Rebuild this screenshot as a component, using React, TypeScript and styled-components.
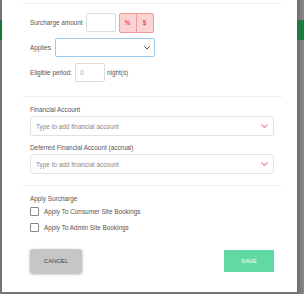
import styled, { createGlobalStyle } from 'styled-components';

const GlobalStyle = createGlobalStyle`
    html, body {
        margin: 0;
        padding: 0;
        background: #7a7a7a;
        font-family: "Liberation Sans", Arial, sans-serif;
    }
`

const Chevron = ({ color, size }: { color: string; size: number }): JSX.Element => (
    <svg width={size} height={size * 0.6} viewBox="0 0 10 6" fill="none">
        <path d="M1 1 L5 5 L9 1" stroke={color} strokeWidth="1.6" strokeLinecap="round" strokeLinejoin="round" />
    </svg>
)

const App = (): JSX.Element => {
    return (
        <Page>
            <GlobalStyle />
            <Backdrop width={2}><GreenPatch /></Backdrop>
            <Column>
                <Modal>
                    <Section>
                        <Row>
                            <Label>Surcharge amount</Label>
                            <SmallInput />
                            <Toggle>
                                <ToggleHalf>%</ToggleHalf>
                                <ToggleHalf>$</ToggleHalf>
                            </Toggle>
                        </Row>
                        <Row>
                            <Label>Applies</Label>
                            <Select>
                                <Chevron color="#444" size={6} />
                            </Select>
                        </Row>
                        <Row>
                            <Label>Eligible period:</Label>
                            <SmallInput placeholder="0" />
                            <Label>night(s)</Label>
                        </Row>
                    </Section>
                    <Section pad="9px 8px 11px 7px">
                        <FieldLabel>Financial Account</FieldLabel>
                        <Combo>
                            <span>Type to add financial account</span>
                            <Chevron color="#f58fa6" size={7} />
                        </Combo>
                        <FieldLabel spaced>Deferred Financial Account (accrual)</FieldLabel>
                        <Combo>
                            <span>Type to add financial account</span>
                            <Chevron color="#f58fa6" size={7} />
                        </Combo>
                    </Section>
                    <Section pad="9px 8px 0 7px">
                        <FieldLabel>Apply Surcharge</FieldLabel>
                        <CheckRow>
                            <Box />
                            <CheckText>Apply To Consumer Site Bookings</CheckText>
                        </CheckRow>
                        <CheckRow spaced>
                            <Box />
                            <CheckText>Apply To Admin Site Bookings</CheckText>
                        </CheckRow>
                        <Buttons>
                            <CancelButton>CANCEL</CancelButton>
                            <SaveButton>SAVE</SaveButton>
                        </Buttons>
                    </Section>
                </Modal>
            </Column>
            <Backdrop width={7}><GreenPatch /></Backdrop>
        </Page>
    )
}

export default App

const Page = styled.div`
    display: flex;
    width: 304px;
    height: 294px;
    overflow: hidden;
    background: #7a7a7a;
`
const Backdrop = styled.div<{ width: number }>`
    width: ${p => p.width}px;
    flex-shrink: 0;
    padding-top: 20px;
    background: linear-gradient(90deg, #6e6e6e, #8a8a8a);
`
const GreenPatch = styled.div`
    height: 20px;
    background: #1d7a42;
`
const Column = styled.div`
    flex: 1;
    display: flex;
    flex-direction: column;
`
const Modal = styled.div`
    height: 292px;
    background: #fff;
    padding: 3px 15px 0 21px;
    box-sizing: border-box;
    box-shadow: 0 0 2px rgba(0,0,0,0.3);
`
const Section = styled.div<{ pad?: string }>`
    border-top: 1px solid #eeeeee;
    padding: ${p => p.pad ?? '9px 8px 14px 7px'};
    display: flex;
    flex-direction: column;
`
const Row = styled.div`
    display: flex;
    align-items: center;
    gap: 2px;
    height: 19px;
    & + & { margin-top: 6px; }
`
const Label = styled.span`
    font-size: 6.4px;
    color: #555;
    margin-right: 1px;
    white-space: nowrap;
`
const SmallInput = styled.input`
    width: 30px;
    height: 19px;
    box-sizing: border-box;
    border: 1px solid #dcdcdc;
    border-radius: 2px;
    padding: 0 4px;
    font-size: 6.4px;
    font-family: "Liberation Sans", Arial, sans-serif;
    outline: none;
    &::placeholder { color: #aaa; }
`
const Toggle = styled.div`
    display: flex;
    height: 18px;
    margin-left: 1px;
    border: 1px solid #f39a9a;
    border-radius: 2px;
    background: #fbd3d3;
    overflow: hidden;
`
const ToggleHalf = styled.div`
    width: 16px;
    display: flex;
    align-items: center;
    justify-content: center;
    font-size: 6.4px;
    font-weight: bold;
    color: #e0506a;
    & + & { border-left: 1px solid #f39a9a; }
`
const Select = styled.div`
    width: 100px;
    height: 19px;
    box-sizing: border-box;
    margin-left: 1px;
    border: 1px solid #9ccbef;
    border-radius: 2px;
    display: flex;
    align-items: center;
    justify-content: flex-end;
    padding-right: 4px;
`
const FieldLabel = styled.div<{ spaced?: boolean }>`
    font-size: 6.4px;
    line-height: 8px;
    color: #555;
    margin-top: ${p => p.spaced ? 8 : 0}px;
`
const Combo = styled.div`
    height: 20px;
    margin-top: 2px;
    box-sizing: border-box;
    border: 1px solid #e2e2e2;
    border-radius: 3px;
    display: flex;
    align-items: center;
    justify-content: space-between;
    padding: 0 5px;
    font-size: 6.4px;
    color: #888;
`
const CheckRow = styled.div<{ spaced?: boolean }>`
    display: flex;
    align-items: center;
    gap: 5px;
    height: 9px;
    margin-top: ${p => p.spaced ? 7 : 4}px;
`
const Box = styled.div`
    width: 9px;
    height: 9px;
    box-sizing: border-box;
    border: 1px solid #888;
    border-radius: 1px;
`
const CheckText = styled.span`
    font-size: 6.4px;
    color: #555;
`
const Buttons = styled.div`
    display: flex;
    justify-content: space-between;
    align-items: center;
    margin-top: 17px;
`
const CancelButton = styled.button`
    width: 52px;
    height: 24px;
    border: none;
    border-radius: 3px;
    background: #c6c6c6;
    box-shadow: 0 1px 3px rgba(0,0,0,0.35);
    font-family: "Liberation Sans", Arial, sans-serif;
    font-size: 6px;
    color: #444;
    padding: 0;
`
const SaveButton = styled.button`
    width: 50px;
    height: 22px;
    border: none;
    border-radius: 1px;
    background: #62d9a2;
    font-family: "Liberation Sans", Arial, sans-serif;
    font-size: 6px;
    color: #fff;
    padding: 0;
`
